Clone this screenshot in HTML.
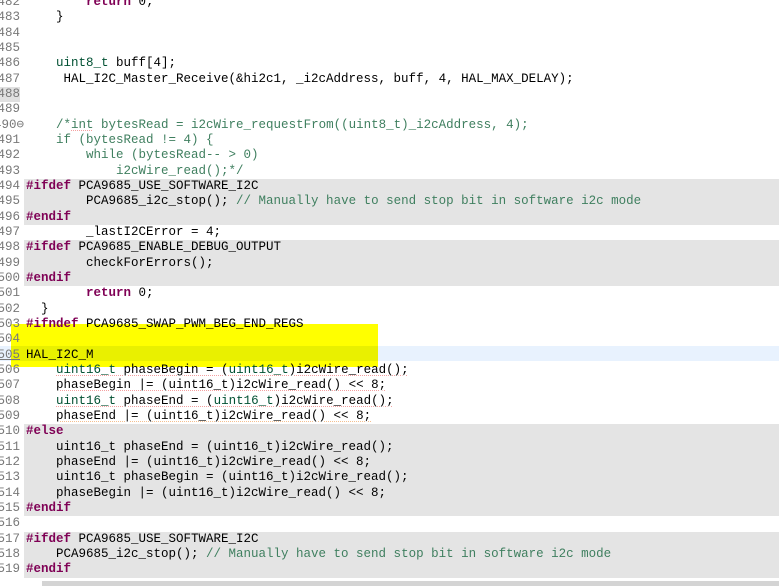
<!DOCTYPE html>
<html><head><meta charset="utf-8"><style>
html,body{margin:0;padding:0;background:#fff;width:779px;height:586px;overflow:hidden;position:relative}
.l{position:absolute;left:0;width:779px;height:15.33px;font-family:"Liberation Mono",monospace;font-size:12.5px;line-height:15.33px;color:#000;white-space:pre}
.n{position:absolute;left:-6px;width:26px;text-align:right;color:#787878}
.c{position:absolute;left:26px}
.g{position:absolute;left:24px;right:0;top:0;bottom:0;background:#e4e4e4}
.k{color:#7f0055;font-weight:bold}
.cm{color:#3f7f5f}
.t{color:#005032}
.sq{text-decoration:underline dotted #f4a0a0;text-decoration-thickness:1px;text-underline-offset:2px}
.sq2{text-decoration:underline dotted #f4c090;text-decoration-thickness:1px;text-underline-offset:2px}
</style></head><body>
<div style="position:absolute;left:11px;top:324px;width:367px;height:43px;background:#ffff00"></div>
<div style="position:absolute;left:0;top:346px;width:779px;height:15px;background:#e8f2fe"></div>
<div style="position:absolute;left:11px;top:346px;width:367px;height:15px;background:#e9f000"></div>
<div class="l" style="top:-5px"><span class="n">482</span><span class="c">        <span class="k">return</span> 0;</span></div>
<div class="l" style="top:10.3px"><span class="n">483</span><span class="c">    }</span></div>
<div class="l" style="top:25.7px"><span class="n">484</span></div>
<div class="l" style="top:41px"><span class="n">485</span></div>
<div class="l" style="top:56.3px"><span class="n">486</span><span class="c">    <span class="t">uint8_t</span> buff[4];</span></div>
<div class="l" style="top:71.7px"><span class="n">487</span><span class="c">     HAL_I2C_Master_Receive(&amp;hi2c1, _i2cAddress, buff, 4, HAL_MAX_DELAY);</span></div>
<div class="l" style="top:87px"><span class="n" style="background:#e0e0e0">488</span></div>
<div class="l" style="top:102.3px"><span class="n">489</span></div>
<div class="l" style="top:117.6px"><span class="n">490⊖</span><span class="c cm">    /*<span class="sq">int</span> bytesRead = i2cWire_requestFrom((uint8_t)_i2cAddress, 4);</span></div>
<div class="l" style="top:133px"><span class="n">491</span><span class="c cm">    if (bytesRead != 4) {</span></div>
<div class="l" style="top:148.3px"><span class="n">492</span><span class="c cm">        while (bytesRead-- &gt; 0)</span></div>
<div class="l" style="top:163.6px"><span class="n">493</span><span class="c cm">            i2cWire_read();*/</span></div>
<div class="l" style="top:179px"><span class="g"></span><span class="n">494</span><span class="c"><span class="k">#ifdef</span> PCA9685_USE_SOFTWARE_I2C</span></div>
<div class="l" style="top:194.3px"><span class="g"></span><span class="n">495</span><span class="c">        PCA9685_i2c_stop(); <span class="cm">// Manually have to send stop bit in software i2c mode</span></span></div>
<div class="l" style="top:209.6px"><span class="g"></span><span class="n">496</span><span class="c"><span class="k">#endif</span></span></div>
<div class="l" style="top:224.9px"><span class="n">497</span><span class="c">        _lastI2CError = 4;</span></div>
<div class="l" style="top:240.3px"><span class="g"></span><span class="n">498</span><span class="c"><span class="k">#ifdef</span> PCA9685_ENABLE_DEBUG_OUTPUT</span></div>
<div class="l" style="top:255.6px"><span class="g"></span><span class="n">499</span><span class="c">        checkForErrors();</span></div>
<div class="l" style="top:270.9px"><span class="g"></span><span class="n">500</span><span class="c"><span class="k">#endif</span></span></div>
<div class="l" style="top:286.3px"><span class="n">501</span><span class="c">        <span class="k">return</span> 0;</span></div>
<div class="l" style="top:301.6px"><span class="n">502</span><span class="c">  }</span></div>
<div class="l" style="top:316.9px"><span class="n">503</span><span class="c"><span class="k">#ifndef</span> PCA9685_SWAP_PWM_BEG_END_REGS</span></div>
<div class="l" style="top:332.2px"><span class="n">504</span></div>
<div class="l" style="top:347.6px"><span class="n" style="text-decoration:underline">505</span><span class="c">HAL_I2C_M</span></div>
<div class="l" style="top:362.9px"><span class="n">506</span><span class="c">    <span class="sq"><span class="t">uint16_t</span> phaseBegin = (<span class="t">uint16_t</span>)i2cWire_read();</span></span></div>
<div class="l" style="top:378.2px"><span class="n">507</span><span class="c">    <span class="sq">phaseBegin |= (uint16_t)i2cWire_read() &lt;&lt; 8;</span></span></div>
<div class="l" style="top:393.6px"><span class="n">508</span><span class="c">    <span class="sq"><span class="t">uint16_t</span> phaseEnd = (<span class="t">uint16_t</span>)i2cWire_read();</span></span></div>
<div class="l" style="top:408.9px"><span class="n">509</span><span class="c">    <span class="sq2">phaseEnd |= (uint16_t)i2cWire_read() &lt;&lt; 8;</span></span></div>
<div class="l" style="top:424.2px"><span class="g"></span><span class="n">510</span><span class="c"><span class="k">#else</span></span></div>
<div class="l" style="top:439.5px"><span class="g"></span><span class="n">511</span><span class="c">    uint16_t phaseEnd = (uint16_t)i2cWire_read();</span></div>
<div class="l" style="top:454.9px"><span class="g"></span><span class="n">512</span><span class="c">    phaseEnd |= (uint16_t)i2cWire_read() &lt;&lt; 8;</span></div>
<div class="l" style="top:470.2px"><span class="g"></span><span class="n">513</span><span class="c">    uint16_t phaseBegin = (uint16_t)i2cWire_read();</span></div>
<div class="l" style="top:485.5px"><span class="g"></span><span class="n">514</span><span class="c">    phaseBegin |= (uint16_t)i2cWire_read() &lt;&lt; 8;</span></div>
<div class="l" style="top:500.9px"><span class="g"></span><span class="n">515</span><span class="c"><span class="k">#endif</span></span></div>
<div class="l" style="top:516.2px"><span class="n">516</span></div>
<div class="l" style="top:531.5px"><span class="g"></span><span class="n">517</span><span class="c"><span class="k">#ifdef</span> PCA9685_USE_SOFTWARE_I2C</span></div>
<div class="l" style="top:546.8px"><span class="g"></span><span class="n">518</span><span class="c">    PCA9685_i2c_stop(); <span class="cm">// Manually have to send stop bit in software i2c mode</span></span></div>
<div class="l" style="top:562.2px"><span class="g"></span><span class="n">519</span><span class="c"><span class="k">#endif</span></span></div>
<div style="position:absolute;left:42px;top:581px;width:737px;height:5px;background:#d4d4d4"></div>
</body></html>
